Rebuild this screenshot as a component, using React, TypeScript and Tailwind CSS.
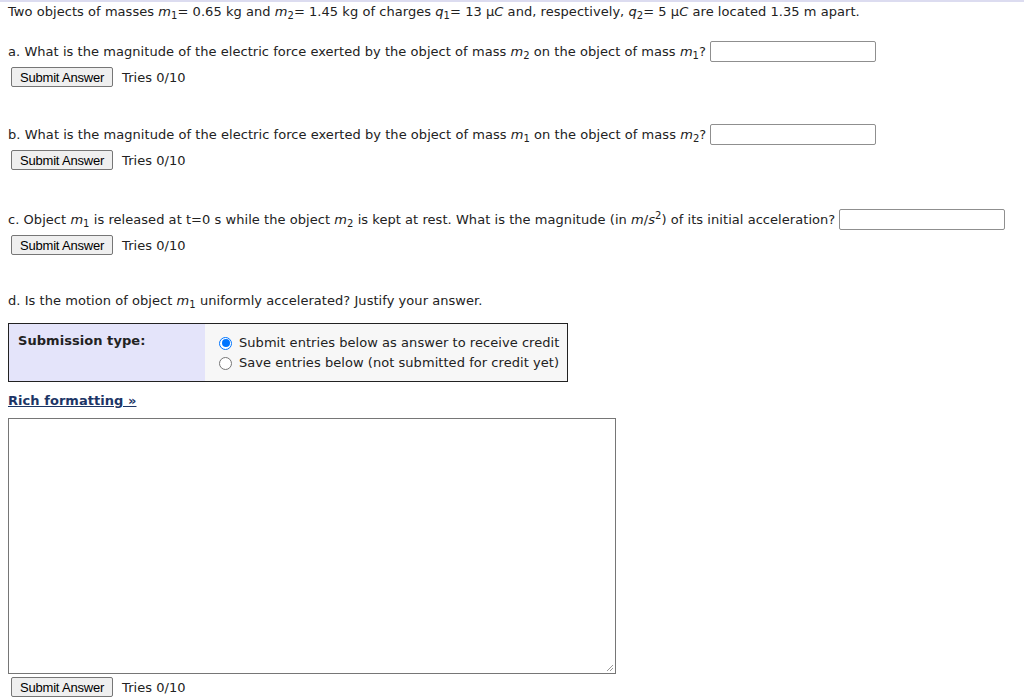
import React from "react";

const font = { fontFamily: '"DejaVu Sans", Verdana, sans-serif' };

const M = ({ n }: { n: string }) => (
  <span>
    <i>m</i>
    <sub className="text-[10px] relative top-[3px] bottom-auto">{n}</sub>
  </span>
);

const Q = ({ n }: { n: string }) => (
  <span>
    <i>q</i>
    <sub className="text-[10px] relative top-[3px] bottom-auto">{n}</sub>
  </span>
);

const SubmitRow = ({ className }: { className?: string }) => (
  <div className={"flex items-center gap-[9px] pl-[3px] " + (className || "")}>
    <button
      className="h-[20px] px-[8px] bg-[#efefef] border border-[#767676] rounded-[2px] text-[13px] text-black leading-none tracking-[-0.2px]"
      style={{ fontFamily: '"Liberation Sans", Arial, sans-serif' }}
    >
      Submit Answer
    </button>
    <span className="text-[13px] pt-[1px]">Tries 0/10</span>
  </div>
);

const Input = () => (
  <span className="inline-block align-middle w-[166px] h-[21px] border border-[#8f8f8f] rounded-[2px] bg-white ml-[4px]" />
);

export default function App() {
  return (
    <div className="min-h-[700px] bg-white text-[#222] border-t-2 border-[#dcdcf0]" style={font}>
      <div className="px-2 text-[13px] leading-[16px] tracking-[0.05px]">
        <div className="pt-[2px] h-[20px]">
          Two objects of masses <M n="1" />= 0.65 kg and <M n="2" />= 1.45 kg of charges <Q n="1" />= 13 μ<i>C</i> and,
          respectively, <Q n="2" />= 5 μ<i>C</i> are located 1.35 m apart.
        </div>

        <div className="mt-[19px] flex items-center h-[21px]">
          <span>
            a. What is the magnitude of the electric force exerted by the object of mass <M n="2" /> on the object of mass <M n="1" />?
          </span>
          <Input />
        </div>
        <SubmitRow className="mt-[5px]" />

        <div className="mt-[37px] flex items-center h-[21px]">
          <span>
            b. What is the magnitude of the electric force exerted by the object of mass <M n="1" /> on the object of mass <M n="2" />?
          </span>
          <Input />
        </div>
        <SubmitRow className="mt-[5px]" />

        <div className="mt-[39px] flex items-center h-[21px]">
          <span>
            c. Object <M n="1" /> is released at t=0 s while the object <M n="2" /> is kept at rest. What is the magnitude (in{" "}
            <i>m</i>/<i>s</i>
            <sup className="text-[10px]">2</sup>) of its initial acceleration?
          </span>
          <Input />
        </div>
        <SubmitRow className="mt-[5px]" />

        <div className="mt-[38px] h-[16px]">
          d. Is the motion of object <M n="1" /> uniformly accelerated? Justify your answer.
        </div>

        <div className="mt-[14px] w-[560px] h-[59px] border border-[#222] flex">
          <div className="w-[196px] bg-[#e4e4fa] pl-[9px] pt-[9px] font-bold text-[13px]">Submission type:</div>
          <div className="flex-1 bg-[#f7f7f7] pl-[14px] pt-[11px] flex flex-col gap-[4px]">
            <label className="flex items-center gap-[7px] h-[16px]">
              <span className="w-[13px] h-[13px] rounded-full border-[1.5px] border-[#0075ff] bg-white flex items-center justify-center">
                <span className="w-[8px] h-[8px] rounded-full bg-[#0075ff]" />
              </span>
              Submit entries below as answer to receive credit
            </label>
            <label className="flex items-center gap-[7px] h-[16px]">
              <span className="w-[13px] h-[13px] rounded-full border border-[#767676] bg-white" />
              Save entries below (not submitted for credit yet)
            </label>
          </div>
        </div>

        <div className="mt-[11px] h-[16px]">
          <a href="#" className="font-bold text-[#1c3566] underline">
            Rich formatting »
          </a>
        </div>

        <div className="mt-[9px] w-[608px] h-[256px] border border-[#767676] relative bg-white">
          <svg className="absolute right-[1px] bottom-[1px]" width="9" height="9" viewBox="0 0 9 9">
            <path d="M8 2 L2 8 M8 5 L5 8" stroke="#999" strokeWidth="1" />
          </svg>
        </div>
        <SubmitRow className="mt-[3px]" />
      </div>
    </div>
  );
}
